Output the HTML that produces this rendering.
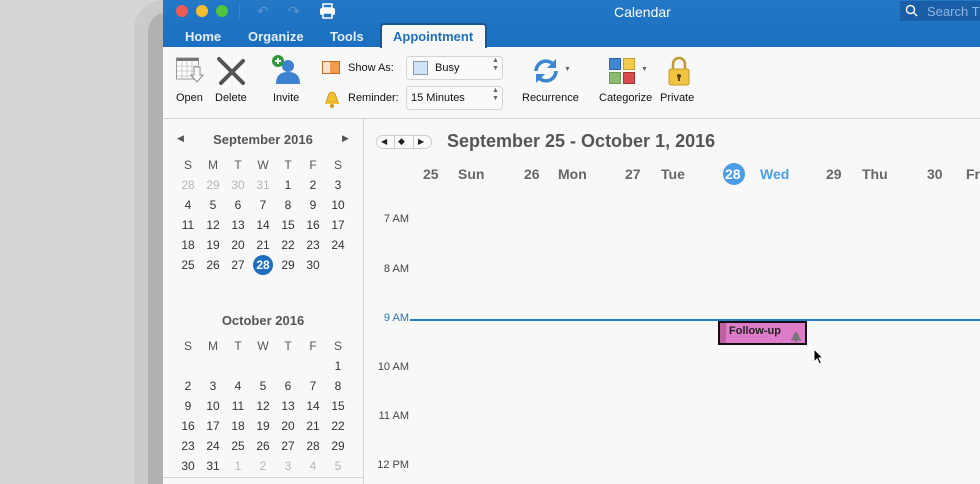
<!DOCTYPE html>
<html><head><meta charset="utf-8">
<style>
*{margin:0;padding:0;box-sizing:border-box}
body{width:980px;height:484px;overflow:hidden;background:#d6d6d6;font-family:"Liberation Sans",sans-serif;position:relative;color:#333}
.a{position:absolute}
.t{position:absolute;white-space:nowrap}
.c{position:absolute;width:24px;text-align:center;font-size:12px;color:#333}
.g{color:#b5b5b5}
.h{position:absolute;font-size:12px;color:#555}
.tl{position:absolute;font-size:11px;color:#444;width:60px;text-align:right;left:349px}
.lbl{position:absolute;font-size:11px;color:#111;white-space:nowrap}
.dn{position:absolute;font-size:14px;font-weight:bold;color:#666}
</style></head><body>
<div class="a" style="left:134px;top:0;width:40px;height:484px;background:#cbcbcb;border-top-left-radius:30px"></div>
<div class="a" style="left:148px;top:12px;width:30px;height:472px;background:#b1b1b1;border-top-left-radius:20px"></div>
<div class="a" style="left:163px;top:0;width:817px;height:484px;background:#f8f8f8"></div>
<div class="a" style="left:163px;top:0;width:817px;height:47px;background:linear-gradient(#2378c6,#1a6fc0)"></div>
<div class="a" style="left:176px;top:5px;width:12px;height:12px;border-radius:50%;background:#f25a56"></div>
<div class="a" style="left:196px;top:5px;width:12px;height:12px;border-radius:50%;background:#f6bd30"></div>
<div class="a" style="left:216px;top:5px;width:12px;height:12px;border-radius:50%;background:#4fc43f"></div>
<div class="a" style="left:239px;top:4px;width:1px;height:14px;background:#3a86cc"></div>
<div class="t" style="left:257px;top:3px;color:#5d97d2;font-size:14px">&#x21B6;</div>
<div class="t" style="left:288px;top:3px;color:#5d97d2;font-size:14px">&#x21B7;</div>
<svg class="a" style="left:319px;top:3px" width="17" height="16" viewBox="0 0 17 16"><rect x="4" y="1" width="9" height="4" fill="none" stroke="#fff" stroke-width="1.5"/><rect x="1" y="5" width="15" height="7" rx="2" fill="#fff"/><rect x="4" y="10" width="9" height="5" fill="#1e74c4" stroke="#fff" stroke-width="1.5"/></svg>
<div class="t" style="left:614px;top:4px;color:#fff;font-size:14px">Calendar</div>
<div class="a" style="left:900px;top:1px;width:80px;height:20px;background:#1a5ea8"></div>
<svg class="a" style="left:905px;top:4px" width="13" height="13"><circle cx="5.5" cy="5.5" r="4" fill="none" stroke="#fff" stroke-width="1.4"/><line x1="8.5" y1="8.5" x2="12" y2="12" stroke="#fff" stroke-width="1.4"/></svg>
<div class="t" style="left:927px;top:4px;color:#8fb6de;font-size:13px">Search Th</div>
<div class="t" style="left:185px;top:29px;color:#e6eef8;font-size:13px;font-weight:bold">Home</div>
<div class="t" style="left:248px;top:29px;color:#e6eef8;font-size:13px;font-weight:bold">Organize</div>
<div class="t" style="left:330px;top:29px;color:#e6eef8;font-size:13px;font-weight:bold">Tools</div>
<div class="a" style="left:380px;top:23px;width:107px;height:25px;background:#f8f8f8;border:2px solid #155797;border-bottom:none;border-radius:4px 4px 0 0"></div>
<div class="t" style="left:393px;top:29px;color:#1f6fc0;font-size:13px;font-weight:bold">Appointment</div>
<svg class="a" style="left:176px;top:57px" width="30" height="30"><rect x="0.5" y="1" width="22" height="21" fill="#fff" stroke="#999"/><rect x="0.5" y="1" width="22" height="3" fill="#777"/><path d="M1 9h22M1 14h22M1 19h22M6 4v18M11 4v18M16 4v18" stroke="#ccc"/><path d="M18 10v8h-3l6 7 6-7h-3v-8z" fill="#fff" stroke="#888"/></svg>
<div class="lbl" style="left:176px;top:92px">Open</div>
<svg class="a" style="left:217px;top:57px" width="30" height="28"><path d="M2 2l24 24M26 4L4 26" stroke="#555" stroke-width="4" stroke-linecap="round"/></svg>
<div class="lbl" style="left:215px;top:92px">Delete</div>
<svg class="a" style="left:270px;top:54px" width="32" height="32"><circle cx="18" cy="12" r="6" fill="#3b82d0"/><path d="M6 30c0-9 5-12 12-12s12 3 12 12z" fill="#3b82d0"/><circle cx="8" cy="7" r="6" fill="#2f9a3a"/><path d="M8 4v6M5 7h6" stroke="#fff" stroke-width="2"/></svg>
<div class="lbl" style="left:273px;top:92px">Invite</div>
<div class="a" style="left:322px;top:61px;width:18px;height:13px;border:1px solid #c56a1f;background:linear-gradient(90deg,#f3e2cf 0 7px,#f39a4c 7px)"></div>
<div class="lbl" style="left:348px;top:62px">Show As:</div>
<svg class="a" style="left:323px;top:86px" width="18" height="22"><path d="M3 16c2-2 1-9 6-10 5 1 4 8 6 10z" fill="#f3c034" stroke="#d49a15"/><rect x="2" y="16" width="14" height="2" fill="#f3c034"/><circle cx="9" cy="20" r="2" fill="#d49a15"/></svg>
<div class="lbl" style="left:348px;top:92px">Reminder:</div>
<div class="a" style="left:406px;top:56px;width:97px;height:24px;border:1px solid #d3d3d3;border-radius:4px;background:#fafafa"></div>
<div class="a" style="left:413px;top:61px;width:15px;height:14px;border:1px solid #8a9bb0;background:#cfe4f6"></div>
<div class="lbl" style="left:435px;top:62px">Busy</div>
<div class="t" style="left:492px;top:57px;font-size:7px;line-height:8px;color:#666">▲<br>▼</div>
<div class="a" style="left:406px;top:86px;width:97px;height:24px;border:1px solid #d3d3d3;border-radius:4px;background:#fafafa"></div>
<div class="lbl" style="left:411px;top:92px">15 Minutes</div>
<div class="t" style="left:492px;top:87px;font-size:7px;line-height:8px;color:#666">▲<br>▼</div>
<svg class="a" style="left:532px;top:57px" width="28" height="28"><path d="M4 14a10 10 0 0 1 17-7" fill="none" stroke="#3a87d4" stroke-width="3.5"/><path d="M24 2v9h-9z" fill="#3a87d4"/><path d="M24 14a10 10 0 0 1-17 7" fill="none" stroke="#3a87d4" stroke-width="3.5"/><path d="M4 26v-9h9z" fill="#3a87d4"/></svg>
<div class="t" style="left:564px;top:66px;font-size:7px;color:#666">▼</div>
<div class="lbl" style="left:522px;top:92px">Recurrence</div>
<div class="a" style="left:609px;top:58px;width:12px;height:12px;background:#3f87d3;border:1px solid #2a66a8"></div>
<div class="a" style="left:623px;top:58px;width:12px;height:12px;background:#f2c94c;border:1px solid #c9a032"></div>
<div class="a" style="left:609px;top:72px;width:12px;height:12px;background:#8dbb6f;border:1px solid #6e9a52"></div>
<div class="a" style="left:623px;top:72px;width:12px;height:12px;background:#d84c4c;border:1px solid #a83333"></div>
<div class="t" style="left:641px;top:66px;font-size:7px;color:#666">▼</div>
<div class="lbl" style="left:599px;top:92px">Categorize</div>
<svg class="a" style="left:667px;top:55px" width="24" height="32"><path d="M6 14V9a6 6 0 0 1 12 0v5" fill="none" stroke="#c49a2a" stroke-width="2.5"/><rect x="2" y="14" width="20" height="16" rx="2" fill="#f2c442" stroke="#c49a2a"/><circle cx="12" cy="21" r="2" fill="#5a4510"/><rect x="11" y="21" width="2" height="5" fill="#5a4510"/></svg>
<div class="lbl" style="left:660px;top:92px">Private</div>
<div class="a" style="left:163px;top:118px;width:817px;height:1px;background:#d3d3d3"></div>
<div class="a" style="left:363px;top:119px;width:1px;height:365px;background:#d3d3d3"></div>
<div class="a" style="left:163px;top:477px;width:200px;height:1px;background:#d3d3d3"></div>
<div class="t" style="left:177px;top:133px;font-size:9px;color:#555">◀</div>
<div class="t" style="left:342px;top:133px;font-size:9px;color:#555">▶</div>
<div class="t" style="left:163px;top:132px;width:200px;text-align:center;font-size:13px;font-weight:bold;color:#555">September 2016</div>
<div class="t" style="left:163px;top:313px;width:200px;text-align:center;font-size:13px;font-weight:bold;color:#555">October 2016</div>
<div id="cal"></div>
<div class="a" style="left:376px;top:135px;width:56px;height:14px;border:1px solid #ccc;border-radius:7px;background:#fafafa"></div>
<div class="a" style="left:394px;top:135px;width:1px;height:14px;background:#ccc"></div>
<div class="a" style="left:413px;top:135px;width:1px;height:14px;background:#ccc"></div>
<div class="t" style="left:381px;top:137px;font-size:8px;color:#222">◀</div>
<div class="t" style="left:398px;top:136px;font-size:9px;color:#222">◆</div>
<div class="t" style="left:418px;top:137px;font-size:8px;color:#222">▶</div>
<div class="t" style="left:447px;top:131px;font-size:18px;font-weight:bold;color:#555">September 25 - October 1, 2016</div>
<div class="dn" style="left:423px;top:166px">25</div><div class="dn" style="left:458px;top:166px">Sun</div>
<div class="dn" style="left:524px;top:166px">26</div><div class="dn" style="left:558px;top:166px">Mon</div>
<div class="dn" style="left:625px;top:166px">27</div><div class="dn" style="left:661px;top:166px">Tue</div>
<div class="a" style="left:723px;top:163px;width:22px;height:22px;border-radius:50%;background:#4a9de6"></div>
<div class="dn" style="left:725px;top:166px;color:#fff">28</div><div class="dn" style="left:760px;top:166px;color:#4a9de6">Wed</div>
<div class="dn" style="left:826px;top:166px">29</div><div class="dn" style="left:862px;top:166px">Thu</div>
<div class="dn" style="left:927px;top:166px">30</div><div class="dn" style="left:966px;top:166px">Fr</div>
<div class="tl" style="top:213px">7 AM</div>
<div class="tl" style="top:263px">8 AM</div>
<div class="tl" style="top:312px;color:#2a74bd">9 AM</div>
<div class="tl" style="top:361px">10 AM</div>
<div class="tl" style="top:410px">11 AM</div>
<div class="tl" style="top:459px">12 PM</div>
<div class="a" style="left:410px;top:319px;width:570px;height:2px;background:#2a7ac2"></div>
<div class="a" style="left:718px;top:321px;width:89px;height:24px;background:#111"></div>
<div class="a" style="left:720px;top:323px;width:85px;height:20px;background:#df7cc9"></div>
<div class="a" style="left:720px;top:323px;width:6px;height:20px;background:#c0619f"></div>
<div class="t" style="left:729px;top:325px;font-size:11px;font-weight:bold;color:#222">Follow-up</div>
<svg class="a" style="left:790px;top:329px" width="12" height="13"><path d="M2 10c1-1 1-6 4-7 3 1 3 6 4 7z" fill="#777"/><rect x="1" y="10" width="10" height="1.5" fill="#777"/><circle cx="6" cy="12" r="1" fill="#777"/></svg>
<svg class="a" style="left:813px;top:348px" width="12" height="18"><path d="M1 1v13l3-3 2.5 5 2-1-2.5-5h4z" fill="#000" stroke="#fff" stroke-width="1"/></svg>
<script>
var xs=[188,213,238,263,288,313,338],h='',L='SMTWTFS';
function row(y,arr,gray){for(var i=0;i<7;i++){if(arr[i]==null)continue;var g=gray&&gray(i)?' g':'';h+='<div class="c'+g+'" style="left:'+(xs[i]-12)+'px;top:'+(y-7)+'px">'+arr[i]+'</div>';}}
function hdr(y){for(var i=0;i<7;i++)h+='<div class="c" style="left:'+(xs[i]-12)+'px;top:'+(y-7)+'px;color:#555">'+L[i]+'</div>';}
hdr(165);
row(185,[28,29,30,31,1,2,3],function(i){return i<4});
var d=4;for(var r=0;r<4;r++){var a=[];for(var i=0;i<7;i++){a.push(d<=30?d:null);d++;}row(205+r*20,a);}
hdr(346);
row(366,[null,null,null,null,null,null,1]);
d=2;for(var r=0;r<5;r++){var a=[];for(var i=0;i<7;i++){a.push(d<=31?d:d-31);d++;}row(386+r*20,a,r==4?function(i){return i>1}:null);}
h+='<div class="a" style="left:253px;top:255px;width:20px;height:20px;border-radius:50%;background:#1f6fc0"></div><div class="c" style="left:251px;top:258px;color:#fff;font-weight:bold">28</div>';
document.getElementById('cal').innerHTML=h;
</script>
</body></html>
